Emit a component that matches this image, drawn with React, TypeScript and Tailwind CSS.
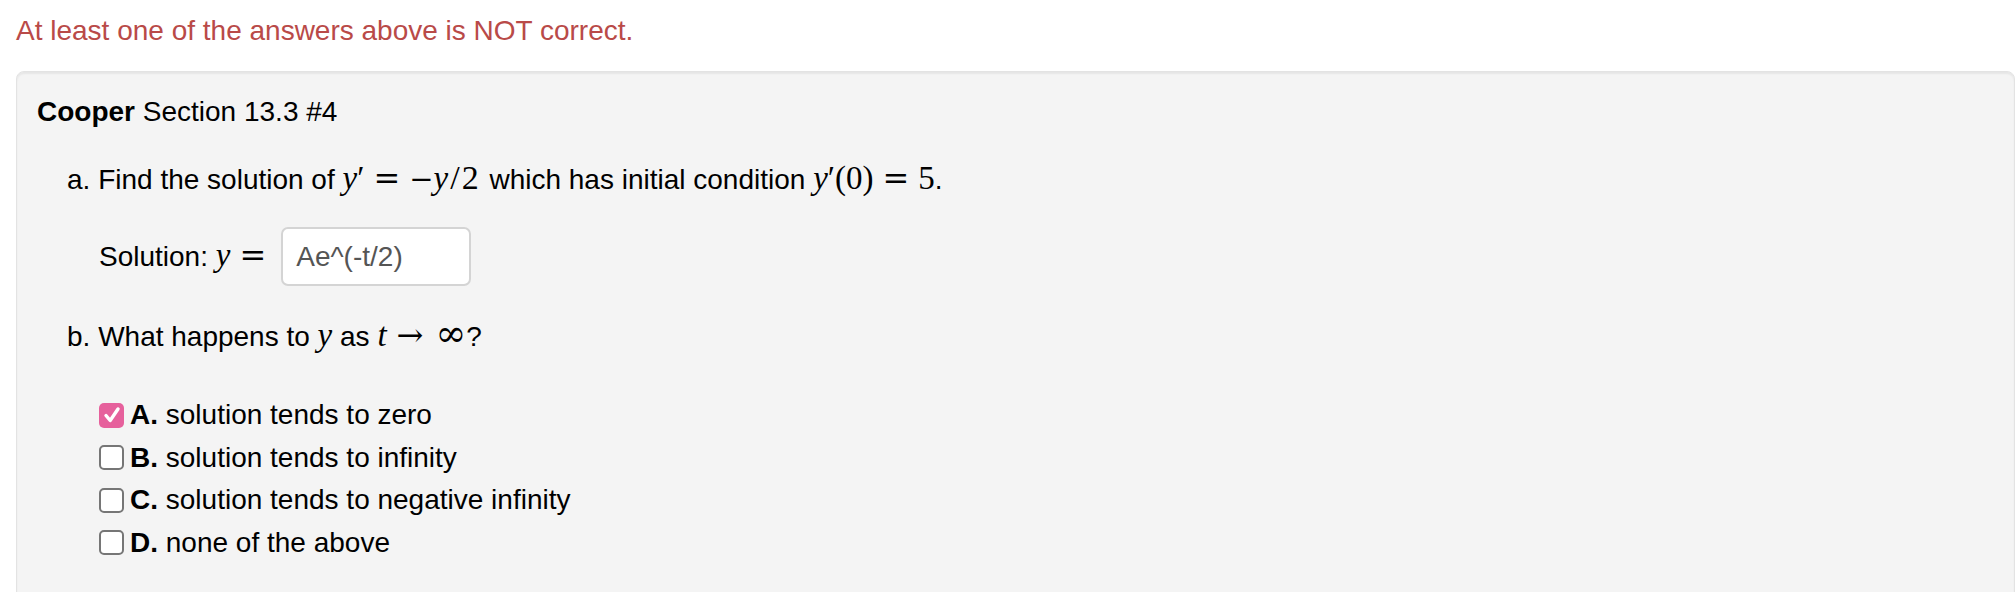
import React from "react";

const Mi = ({ children }: { children: React.ReactNode }) => (
  <span className="font-['Liberation_Serif',serif] italic text-[33px] leading-none">{children}</span>
);
const Mn = ({ children }: { children: React.ReactNode }) => (
  <span className="font-['Liberation_Serif',serif] text-[33px] leading-none">{children}</span>
);
const Rel = ({ children }: { children: React.ReactNode }) => (
  <span className="font-['DejaVu_Serif',serif] text-[32px] leading-none mx-[9px]">{children}</span>
);

const Check = ({ checked }: { checked: boolean }) =>
  checked ? (
    <span className="inline-flex w-[25px] h-[25px] rounded-[5px] bg-[#e6609c] items-center justify-center shrink-0">
      <svg width="20" height="20" viewBox="0 0 20 20">
        <path d="M4 10.5 L8.2 15.5 L16 4" fill="none" stroke="white" strokeWidth="3.4" strokeLinecap="round" strokeLinejoin="round" />
      </svg>
    </span>
  ) : (
    <span className="inline-block w-[25px] h-[25px] rounded-[5px] bg-white border-[2px] border-[#767676] shrink-0" />
  );

const options = [
  { l: "A.", t: "solution tends to zero", c: true },
  { l: "B.", t: "solution tends to infinity", c: false },
  { l: "C.", t: "solution tends to negative infinity", c: false },
  { l: "D.", t: "none of the above", c: false },
];

export default function App() {
  return (
    <div className="w-[2016px] h-[592px] overflow-hidden bg-white font-['Liberation_Sans',Arial,sans-serif] text-[28px] text-black">
      <div className="pl-[16px] pt-[11px] pb-[20px] leading-[40px] text-[#b94a48]">
        At least one of the answers above is NOT correct.
      </div>
      <div className="ml-[16px] mr-[1px] border border-[#e3e3e3] rounded-[8px] bg-[#f4f4f4] shadow-[inset_0_2px_2px_rgba(0,0,0,0.06)] pl-[20px] pt-[20px] pb-[60px]">
        <div className="leading-[40px]">
          <b>Cooper</b> Section 13.3 #4
        </div>
        <div className="pl-[30px] mt-[28px]">
          <div className="h-[40px] leading-[40px] whitespace-nowrap">
            a. Find the solution of <Mi>y</Mi>
            <Mn>′</Mn>
            <Rel>=</Rel>
            <span className="font-['DejaVu_Serif',serif] text-[29px] leading-none">−</span>
            <Mi>y</Mi>
            <span className="font-['Liberation_Serif',serif] text-[34px] leading-none px-[2px]">/</span>
            <span className="font-['Liberation_Serif',serif] text-[34px] leading-none mr-[3px]">2</span> which has initial condition{" "}
            <Mi>y</Mi>
            <Mn>′(0)</Mn>
            <Rel>=</Rel>
            <Mn>5</Mn>.
          </div>
          <div className="pl-[32px] mt-[27px] flex items-center h-[59px]">
            <span className="h-[40px] leading-[40px] whitespace-nowrap">
              Solution: <Mi>y</Mi>
              <Rel>=</Rel>
            </span>
            <div className="ml-[6px] w-[190px] h-[59px] bg-white border-[2px] border-[#d4d4d4] rounded-[7px] flex items-center pl-[13px] text-[#555555] leading-[40px]">
              Ae^(-t/2)
            </div>
          </div>
          <div className="h-[40px] leading-[40px] mt-[29px] whitespace-nowrap">
            b. What happens to <Mi>y</Mi> as <Mi>t</Mi>
            <span className="font-['DejaVu_Serif',serif] text-[32px] leading-none ml-[10px] mr-[12px]">→</span>
            <span className="font-['DejaVu_Serif',serif] text-[37px] leading-none">∞</span>?
          </div>
          <div className="pl-[32px] mt-[39px] flex flex-col">
            {options.map((o) => (
              <div key={o.l} className="flex items-center h-[42.5px] gap-[6px] whitespace-nowrap">
                <Check checked={o.c} />
                <span className="leading-[42px]">
                  <b>{o.l}</b> {o.t}
                </span>
              </div>
            ))}
          </div>
        </div>
      </div>
    </div>
  );
}
